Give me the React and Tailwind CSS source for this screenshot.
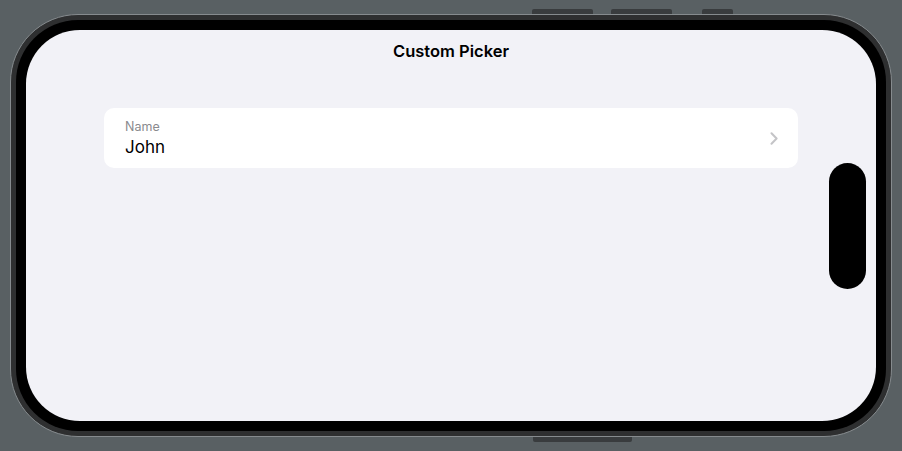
import React from 'react';

const ChevronRight = () => (
  <svg width="8" height="13" viewBox="0 0 8 13" fill="none">
    <path d="M1.5 1.2 L6.6 6.5 L1.5 11.8" stroke="#c4c4c7" strokeWidth="2" strokeLinecap="round" strokeLinejoin="round" />
  </svg>
);

export default function App() {
  return (
    <div
      className="h-[451px] w-[902px] overflow-hidden bg-[#596063]"
      style={{ fontFamily: 'Inter, "Noto Sans", sans-serif' }}
    >
      {/* volume / power buttons on top edge */}
      <div className="flex h-[14px] items-end pl-[532px]">
        <div className="h-[5px] w-[61px] rounded-t-[2px] bg-[#393c3e]" />
        <div className="ml-[18px] h-[5px] w-[61px] rounded-t-[2px] bg-[#393c3e]" />
        <div className="ml-[30px] h-[5px] w-[31px] rounded-t-[2px] bg-[#393c3e]" />
      </div>

      {/* device frame */}
      <div className="ml-[10px] h-[423px] w-[882px] rounded-[68px] border border-[#868b8e] bg-[#2e2f30] p-[5px]">
        <div className="h-full w-full rounded-[62px] bg-black p-[10px]">
          <div className="flex h-full w-full flex-col overflow-hidden rounded-[54px] bg-[#f2f2f7]">
            <div className="pt-[11px] text-center text-[16.5px] font-semibold leading-[20px] text-black">
              Custom Picker
            </div>

            <div className="mt-[47px] flex items-start">
              <div className="ml-[78px] flex h-[60px] w-[694px] items-center rounded-[10px] bg-white pl-[21px] pr-[20px]">
                <div className="flex flex-1 flex-col">
                  <span className="text-[12.5px] leading-[16px] text-[#8a8a8e]">Name</span>
                  <span className="mt-[2px] text-[17px] leading-[20px] text-black">John</span>
                </div>
                <ChevronRight />
              </div>

              {/* dynamic island */}
              <div className="ml-auto mr-[10px] mt-[55px] h-[126px] w-[37px] rounded-full bg-black" />
            </div>
          </div>
        </div>
      </div>

      {/* bottom button */}
      <div className="pl-[533px]">
        <div className="h-[5px] w-[99px] rounded-b-[2px] bg-[#393c3e]" />
      </div>
    </div>
  );
}
